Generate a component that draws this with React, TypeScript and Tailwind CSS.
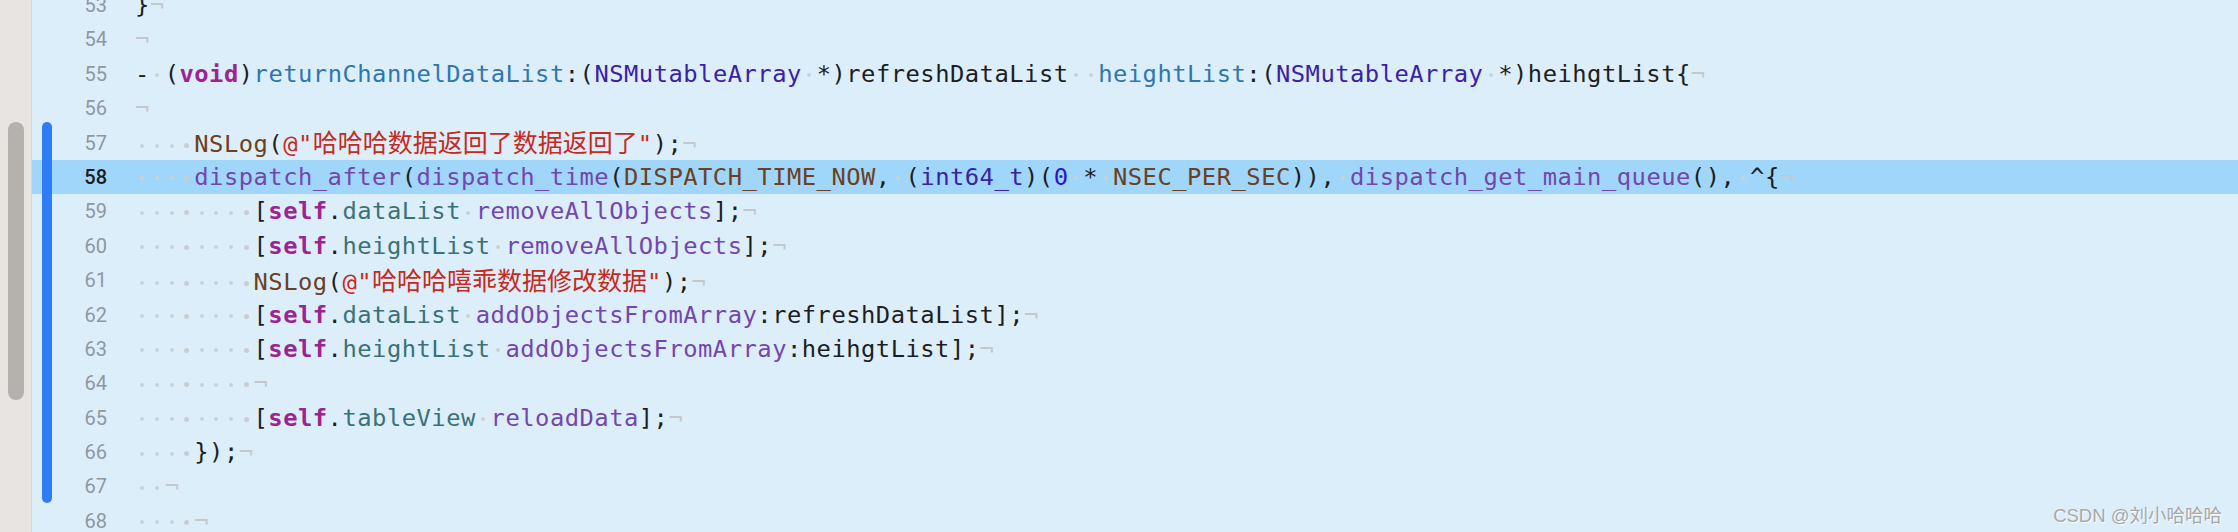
import React from "react";

type Tok = { t: string; c: string };

const K = "text-[#9b2393] font-bold";
const DECL = "text-[#2f76ac]";
const CLS = "text-[#3b21a3]";
const FN = "text-[#7446ad]";
const MAC = "text-[#6b4023]";
const PROP = "text-[#3a7278]";
const STR = "text-[#c52a1c]";
const NUM = "text-[#2a12d0]";
const P = "text-[#1e1e22]";

const t = (c: string, s: string): Tok => ({ t: s, c });

const lines: { n: number; toks: Tok[]; hl?: boolean }[] = [
  { n: 53, toks: [t(P, "}")] },
  { n: 54, toks: [] },
  {
    n: 55,
    toks: [
      t(P, "- ("),
      t(K, "void"),
      t(P, ")"),
      t(DECL, "returnChannelDataList"),
      t(P, ":("),
      t(CLS, "NSMutableArray"),
      t(P, " *)refreshDataList  "),
      t(DECL, "heightList"),
      t(P, ":("),
      t(CLS, "NSMutableArray"),
      t(P, " *)heihgtList{"),
    ],
  },
  { n: 56, toks: [] },
  {
    n: 57,
    toks: [t(P, "    "), t(MAC, "NSLog"), t(P, "("), t(STR, '@"哈哈哈数据返回了数据返回了"'), t(P, ");")],
  },
  {
    n: 58,
    hl: true,
    toks: [
      t(P, "    "),
      t(FN, "dispatch_after"),
      t(P, "("),
      t(FN, "dispatch_time"),
      t(P, "("),
      t(MAC, "DISPATCH_TIME_NOW"),
      t(P, ", ("),
      t(CLS, "int64_t"),
      t(P, ")("),
      t(NUM, "0"),
      t(P, " * "),
      t(MAC, "NSEC_PER_SEC"),
      t(P, ")), "),
      t(FN, "dispatch_get_main_queue"),
      t(P, "(), ^{"),
    ],
  },
  {
    n: 59,
    toks: [t(P, "        ["), t(K, "self"), t(P, "."), t(PROP, "dataList"), t(P, " "), t(FN, "removeAllObjects"), t(P, "];")],
  },
  {
    n: 60,
    toks: [t(P, "        ["), t(K, "self"), t(P, "."), t(PROP, "heightList"), t(P, " "), t(FN, "removeAllObjects"), t(P, "];")],
  },
  {
    n: 61,
    toks: [t(P, "        "), t(MAC, "NSLog"), t(P, "("), t(STR, '@"哈哈哈嘻乖数据修改数据"'), t(P, ");")],
  },
  {
    n: 62,
    toks: [
      t(P, "        ["),
      t(K, "self"),
      t(P, "."),
      t(PROP, "dataList"),
      t(P, " "),
      t(FN, "addObjectsFromArray"),
      t(P, ":refreshDataList];"),
    ],
  },
  {
    n: 63,
    toks: [
      t(P, "        ["),
      t(K, "self"),
      t(P, "."),
      t(PROP, "heightList"),
      t(P, " "),
      t(FN, "addObjectsFromArray"),
      t(P, ":heihgtList];"),
    ],
  },
  { n: 64, toks: [t(P, "        ")] },
  {
    n: 65,
    toks: [t(P, "        ["), t(K, "self"), t(P, "."), t(PROP, "tableView"), t(P, " "), t(FN, "reloadData"), t(P, "];")],
  },
  { n: 66, toks: [t(P, "    });")] },
  { n: 67, toks: [t(P, "  ")] },
  { n: 68, toks: [t(P, "    ")] },
];

function Dot({ big }: { big: boolean }) {
  return (
    <span className="inline-flex w-[14.82px] h-[1em] items-center justify-center align-middle">
      {big ? (
        <span className="block w-[5px] h-[5px] rounded-full bg-[#c9cdd1]" />
      ) : (
        <span className="block w-[4px] h-[4px] rounded-full bg-[#cdd1d4]" />
      )}
    </span>
  );
}

function renderCode(toks: Tok[]) {
  const out: React.ReactNode[] = [];
  let leading = true;
  let col = 0;
  let key = 0;
  for (const tok of toks) {
    let buf = "";
    let cjk = "";
    const flushBuf = () => {
      if (buf) {
        out.push(
          <span key={key++} className={tok.c}>
            {buf}
          </span>
        );
        buf = "";
      }
    };
    const flushCjk = () => {
      if (cjk) {
        out.push(
          <span
            key={key++}
            className={`${tok.c} font-['Noto_Sans_CJK_SC',sans-serif] text-[25px] tracking-[0px]`}
          >
            {cjk}
          </span>
        );
        cjk = "";
      }
    };
    for (const ch of Array.from(tok.t)) {
      if (ch === " ") {
        flushBuf();
        flushCjk();
        out.push(<Dot key={key++} big={leading && (col + 1) % 4 === 0} />);
        col++;
      } else if (/[\u4e00-\u9fff]/.test(ch)) {
        flushBuf();
        cjk += ch;
        leading = false;
      } else {
        flushCjk();
        buf += ch;
        leading = false;
        col++;
      }
    }
    flushBuf();
    flushCjk();
  }
  out.push(
    <span key={key++} className="text-[#c5c8cb]">
      ¬
    </span>
  );
  return out;
}

export default function App() {
  return (
    <div className="w-[2238px] h-[532px] flex overflow-hidden bg-[#ddeefb]">
      <div className="w-[32px] shrink-0 bg-[#e8e4e1] border-r border-[#d9d5d2] pt-[122px] pl-[8px]">
        <div className="w-[16px] h-[278px] rounded-full bg-[#b5b1ad]" />
      </div>
      <div className="relative flex-1 overflow-hidden">
        <div className="-mt-[12px] flex flex-col">
          {lines.map((ln) => (
            <div
              key={ln.n}
              className={`flex items-center h-[34.4px] shrink-0 ${ln.hl ? "bg-[#a0d6f9]" : ""}`}
            >
              <div
                className={`w-[75px] shrink-0 text-right font-['Roboto',sans-serif] text-[20px] leading-[34.4px] ${
                  ln.hl ? "text-[#1c1c1e] font-medium" : "text-[#8e98a0]"
                }`}
              >
                {ln.n}
              </div>
              <div className="ml-[28px] whitespace-pre font-['DejaVu_Sans_Mono',monospace] text-[23.8px] tracking-[0.49px] leading-[34.4px]">
                {renderCode(ln.toks)}
              </div>
            </div>
          ))}
        </div>
        <div className="absolute left-[10px] top-[122px] w-[10px] h-[381px] rounded-full bg-[#2f7df6]" />
        <div className="absolute right-[16px] bottom-[7px] font-['Liberation_Sans','Noto_Sans_CJK_SC',sans-serif] text-[18.5px] leading-none text-[#a8a8a8] [text-shadow:1px_1px_1px_rgba(255,255,255,0.9)]">
          CSDN @刘小哈哈哈
        </div>
      </div>
    </div>
  );
}
